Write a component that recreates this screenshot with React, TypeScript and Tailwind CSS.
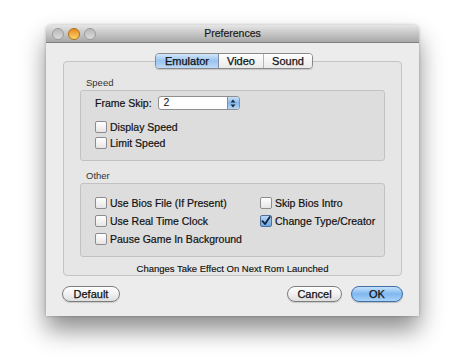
import React from 'react'

function Checkbox({ checked = false }: { checked?: boolean }) {
  if (checked) {
    return (
      <div className="w-[12px] h-[12px] shrink-0 rounded-[2px] border border-[#4f6f99] bg-gradient-to-b from-[#b9d6f5] to-[#6fa6e3] flex items-center justify-center">
        <svg width="10" height="10" viewBox="0 0 10 10">
          <path d="M1.5 5.2 L4 8 L8.8 1" stroke="#10233f" strokeWidth="1.8" fill="none" strokeLinecap="round" strokeLinejoin="round" />
        </svg>
      </div>
    )
  }
  return (
    <div className="w-[12px] h-[12px] shrink-0 rounded-[2px] border border-[#8d8d8d] bg-gradient-to-b from-[#ffffff] to-[#e6e6e6]" />
  )
}

function CheckRow({ label, checked }: { label: string; checked?: boolean }) {
  return (
    <div className="h-[14px] flex items-center gap-[3px]">
      <Checkbox checked={checked} />
      <span className="text-[10.5px] leading-none text-[#111] [-webkit-text-stroke:0.2px_#111]">{label}</span>
    </div>
  )
}

function PushButton({ label, primary = false, width }: { label: string; primary?: boolean; width: string }) {
  return (
    <div
      className={
        primary
          ? `${width} h-[16px] rounded-full border border-[#3f6fa8] bg-gradient-to-b from-[#c6e2fb] via-[#7fb7ef] to-[#a9d4fa] flex items-center justify-center text-[11px] text-[#111] [-webkit-text-stroke:0.25px_#111] shadow-[0_1px_1px_rgba(0,0,0,0.2)]`
          : `${width} h-[16px] rounded-full border border-[#7e7e7e] bg-gradient-to-b from-[#ffffff] via-[#f1f1f1] to-[#dedede] flex items-center justify-center text-[11px] text-[#111] [-webkit-text-stroke:0.25px_#111] shadow-[0_1px_1px_rgba(0,0,0,0.15)]`
      }
    >
      {label}
    </div>
  )
}

export default function App() {
  return (
    <div className="w-[474px] h-[361px] bg-white overflow-hidden pt-[25px] pl-[46px]" style={{ fontFamily: '"Liberation Sans", Arial, sans-serif' }}>
      {/* Window */}
      <div className="w-[373px] h-[291px] bg-[#ececec] rounded-t-[5px] flex flex-col shadow-[0_14px_24px_rgba(0,0,0,0.45),0_0_3px_rgba(0,0,0,0.25)]">
        {/* Title bar */}
        <div className="h-[18px] rounded-t-[5px] bg-gradient-to-b from-[#e6e6e6] to-[#a8a8a8] border-b border-[#7f7f7f] flex items-center relative">
          <div className="flex items-center gap-[4px] pl-[6px]">
            <div className="w-[12px] h-[12px] rounded-full bg-gradient-to-b from-[#b8b8b8] to-[#dcdcdc] border border-[#9c9c9c]" />
            <div className="w-[12px] h-[12px] rounded-full bg-gradient-to-b from-[#e48a1c] to-[#ffd36a] border border-[#b0700f]" />
            <div className="w-[12px] h-[12px] rounded-full bg-gradient-to-b from-[#b8b8b8] to-[#dcdcdc] border border-[#9c9c9c]" />
          </div>
          <div className="absolute inset-0 flex items-center justify-center text-[10.5px] text-[#1a1a1a] [-webkit-text-stroke:0.2px_#1a1a1a]">Preferences</div>
        </div>

        {/* Body */}
        <div className="px-[17px] pt-[10px] flex flex-col">
          {/* Tabs */}
          <div className="relative z-10 flex justify-center pl-[3px]">
            <div className="flex h-[16px] rounded-[4px] border border-[#8a8a8a] overflow-hidden text-[11px] text-[#111] [-webkit-text-stroke:0.25px_#111] shadow-[0_1px_1px_rgba(0,0,0,0.15)]">
              <div className="w-[63px] flex items-center justify-center bg-gradient-to-b from-[#d3e6f9] via-[#99c3ee] to-[#c0dbf6] border-r border-[#7d8ea8]">Emulator</div>
              <div className="w-[45px] flex items-center justify-center bg-gradient-to-b from-[#ffffff] to-[#e9e9e9] border-r border-[#b5b5b5]">Video</div>
              <div className="w-[48px] flex items-center justify-center bg-gradient-to-b from-[#ffffff] to-[#e9e9e9]">Sound</div>
            </div>
          </div>

          {/* Tab panel */}
          <div className="-mt-[8px] h-[215px] rounded-[4px] border border-[#c4c4c4] bg-[#e6e6e6] px-[16px] pt-[15px] flex flex-col">
            <div className="h-[12px] pl-[6px] text-[9.5px] leading-[12px] text-[#333]">Speed</div>
            <div className="mt-[1px] h-[71px] rounded-[3px] border border-[#c2c2c2] bg-[#dddddd] pl-[14px] pt-[5px] flex flex-col">
              <div className="h-[14px] flex items-center gap-[6px]">
                <span className="text-[10.5px] leading-none text-[#111] [-webkit-text-stroke:0.2px_#111]">Frame Skip:</span>
                <div className="w-[82px] h-[14px] rounded-[3px] border border-[#8f8f8f] bg-white flex items-stretch overflow-hidden">
                  <div className="flex-1 flex items-center pl-[5px] text-[10.5px] text-[#111]">2</div>
                  <div className="w-[12px] border-l border-[#6d8fba] bg-gradient-to-b from-[#c9e0f7] via-[#86b6ea] to-[#b8d6f5] flex items-center justify-center">
                    <svg width="6" height="9" viewBox="0 0 6 9">
                      <path d="M3 0.5 L5.5 3.5 L0.5 3.5 Z" fill="#1a2a40" />
                      <path d="M3 8.5 L5.5 5.5 L0.5 5.5 Z" fill="#1a2a40" />
                    </svg>
                  </div>
                </div>
              </div>
              <div className="mt-[10px] flex flex-col gap-[2px]">
                <CheckRow label="Display Speed" />
                <CheckRow label="Limit Speed" />
              </div>
            </div>

            <div className="mt-[9px] h-[12px] pl-[6px] text-[9.5px] leading-[12px] text-[#333]">Other</div>
            <div className="mt-[1px] h-[74px] rounded-[3px] border border-[#c2c2c2] bg-[#dddddd] pl-[14px] pt-[12px] flex">
              <div className="w-[165px] flex flex-col gap-[4px]">
                <CheckRow label="Use Bios File (If Present)" />
                <CheckRow label="Use Real Time Clock" />
                <CheckRow label="Pause Game In Background" />
              </div>
              <div className="flex flex-col gap-[4px]">
                <CheckRow label="Skip Bios Intro" />
                <CheckRow label="Change Type/Creator" checked />
              </div>
            </div>

            <div className="mt-[6px] h-[12px] flex items-center justify-center text-[9.5px] text-[#111] [-webkit-text-stroke:0.15px_#111]">
              Changes Take Effect On Next Rom Launched
            </div>
          </div>

          {/* Buttons */}
          <div className="mt-[10px] flex items-center -mx-[1px]">
            <PushButton label="Default" width="w-[58px]" />
            <div className="flex-1" />
            <PushButton label="Cancel" width="w-[55px]" />
            <div className="w-[9px]" />
            <PushButton label="OK" primary width="w-[52px]" />
          </div>
        </div>
      </div>
    </div>
  )
}
